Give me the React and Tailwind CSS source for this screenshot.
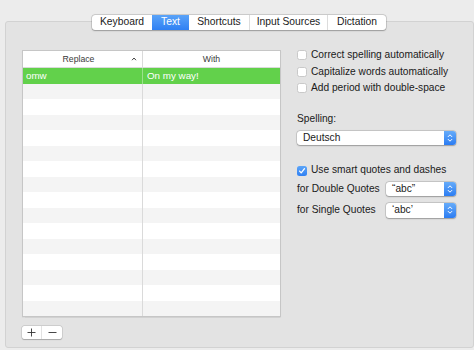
import React from "react";

function Check({ checked }) {
  if (checked) {
    return (
      <span className="w-[10px] h-[10px] rounded-[2.5px] bg-linear-to-b from-[#5ca5f8] to-[#2f80f3] flex items-center justify-center shrink-0">
        <svg width="8" height="8" viewBox="0 0 8 8">
          <path d="M1.6 4.1 L3.2 5.9 L6.5 1.7" stroke="white" strokeWidth="1.3" fill="none" strokeLinecap="round" strokeLinejoin="round" />
        </svg>
      </span>
    );
  }
  return <span className="w-[10px] h-[10px] rounded-[2.5px] bg-white border border-[#c9c9c9] shrink-0" />;
}

function CheckRow({ checked, label, className }) {
  return (
    <div className={"flex items-center gap-[4px] " + className}>
      <Check checked={checked} />
      <span className="text-[10.2px] leading-none text-[#1a1a1a]">{label}</span>
    </div>
  );
}

function Popup({ label, className }) {
  return (
    <div className={"flex bg-white rounded-[3px] shadow-[0_0_0_0.5px_rgba(0,0,0,0.18),0_0.5px_1.5px_rgba(0,0,0,0.25)] " + className}>
      <span className="flex-1 flex items-center pl-[6px] text-[10.2px] leading-none text-[#1a1a1a]">{label}</span>
      <span className="w-[12px] rounded-r-[3px] bg-linear-to-b from-[#65abf9] to-[#2b7cf2] flex items-center justify-center">
        <svg width="6" height="10" viewBox="0 0 6 10">
          <path d="M1.2 3.6 L3 1.8 L4.8 3.6 M1.2 6.4 L3 8.2 L4.8 6.4" stroke="white" strokeWidth="1" fill="none" strokeLinecap="round" strokeLinejoin="round" />
        </svg>
      </span>
    </div>
  );
}

const tabs = [
  { label: "Keyboard", w: "w-[60px]" },
  { label: "Text", w: "w-[37px]", active: true },
  { label: "Shortcuts", w: "w-[60px]" },
  { label: "Input Sources", w: "w-[78px]" },
  { label: "Dictation", w: "w-[59px]" },
];

export default function App() {
  const rows = Array.from({ length: 16 }, (_, i) => i);
  return (
    <div className="w-[474px] h-[350px] bg-[#ececec] font-['Liberation_Sans',Arial,sans-serif] pt-[15px] overflow-hidden">
      <div className="flex justify-center h-[15px] relative z-10 pl-[4px]">
        <div className="flex bg-white rounded-[3px] shadow-[0_0_0_0.5px_rgba(0,0,0,0.2),0_0.5px_1.5px_rgba(0,0,0,0.25)] overflow-hidden">
          {tabs.map((t, i) => (
            <div
              key={t.label}
              className={
                "flex items-center justify-center text-[10.3px] leading-none " +
                t.w +
                (t.active
                  ? " bg-linear-to-b from-[#5aa3f8] to-[#2f80f3] text-white"
                  : " text-[#1a1a1a]") +
                (i > 0 && !t.active && !tabs[i - 1].active ? " border-l border-[#dcdcdc]" : "")
              }
            >
              {t.label}
            </div>
          ))}
        </div>
      </div>
      <div className="ml-[5px] mt-[-9px] w-[469px] h-[327px] bg-[#e3e3e3] border border-[#d2d2d2] rounded-[3px] flex pl-[16px] pt-[28px]">
        <div className="w-[259px] flex flex-col">
          <div className="h-[267px] bg-white border border-[#c6c6c6] flex flex-col shadow-[0_0.5px_1px_rgba(0,0,0,0.08)]">
            <div className="h-[17px] flex border-b border-[#dadada] text-[8.7px] text-[#3a3a3a] leading-none">
              <div className="w-[120px] border-r border-[#dadada] flex items-center relative">
                <span className="flex-1 text-center pr-[8px]">Replace</span>
                <svg className="absolute right-[5px] top-[6px]" width="6" height="4" viewBox="0 0 6 4">
                  <path d="M1 3.2 L3 1 L5 3.2" stroke="#444" strokeWidth="1" fill="none" />
                </svg>
              </div>
              <div className="flex-1 flex items-center justify-center">With</div>
            </div>
            <div className="flex-1 flex flex-col">
              {rows.map((i) => (
                <div
                  key={i}
                  className={
                    "flex-1 flex text-[9.8px] leading-none " +
                    (i === 0 ? "bg-[#62d14b] text-white" : i % 2 === 1 ? "bg-[#f4f4f4]" : "bg-white")
                  }
                >
                  <div className={"w-[120px] flex items-center pl-[3px] border-r " + (i === 0 ? "border-[#9be28b]" : "border-[#dadada]")}>
                    {i === 0 ? "omw" : ""}
                  </div>
                  <div className="flex-1 flex items-center pl-[4px]">{i === 0 ? "On my way!" : ""}</div>
                </div>
              ))}
            </div>
          </div>
          <div className="mt-[9px] flex h-[13px] w-[40px] bg-white rounded-[2px] shadow-[0_0_0_0.5px_rgba(0,0,0,0.15),0_0.5px_1px_rgba(0,0,0,0.2)]">
            <div className="w-[20px] flex items-center justify-center border-r border-[#e2e2e2]">
              <svg width="9" height="9" viewBox="0 0 9 9">
                <path d="M4.5 0.5 V8.5 M0.5 4.5 H8.5" stroke="#333" strokeWidth="0.9" />
              </svg>
            </div>
            <div className="flex-1 flex items-center justify-center">
              <svg width="9" height="9" viewBox="0 0 9 9">
                <path d="M0.5 4.5 H8.5" stroke="#333" strokeWidth="0.9" />
              </svg>
            </div>
          </div>
        </div>
        <div className="ml-[16px] flex flex-col mt-[-3px]">
          <CheckRow className="h-[16.5px]" label="Correct spelling automatically" />
          <CheckRow className="h-[16.5px]" label="Capitalize words automatically" />
          <CheckRow className="h-[16.5px]" label="Add period with double-space" />
          <div className="mt-[16px] h-[14px] flex items-center text-[10.2px] leading-none text-[#1a1a1a]">Spelling:</div>
          <Popup className="mt-[4.5px] h-[14px] w-[159px]" label="Deutsch" />
          <CheckRow className="mt-[17.5px] h-[16px]" checked label="Use smart quotes and dashes" />
          <div className="mt-[3.5px] h-[14px] flex items-center">
            <span className="w-[89px] text-[10.2px] leading-none text-[#1a1a1a]">for Double Quotes</span>
            <Popup className="h-[14px] w-[70px]" label="“abc”" />
          </div>
          <div className="mt-[7px] h-[14.5px] flex items-center">
            <span className="w-[89px] text-[10.2px] leading-none text-[#1a1a1a]">for Single Quotes</span>
            <Popup className="h-[14.5px] w-[70px]" label="‘abc’" />
          </div>
        </div>
      </div>
    </div>
  );
}
